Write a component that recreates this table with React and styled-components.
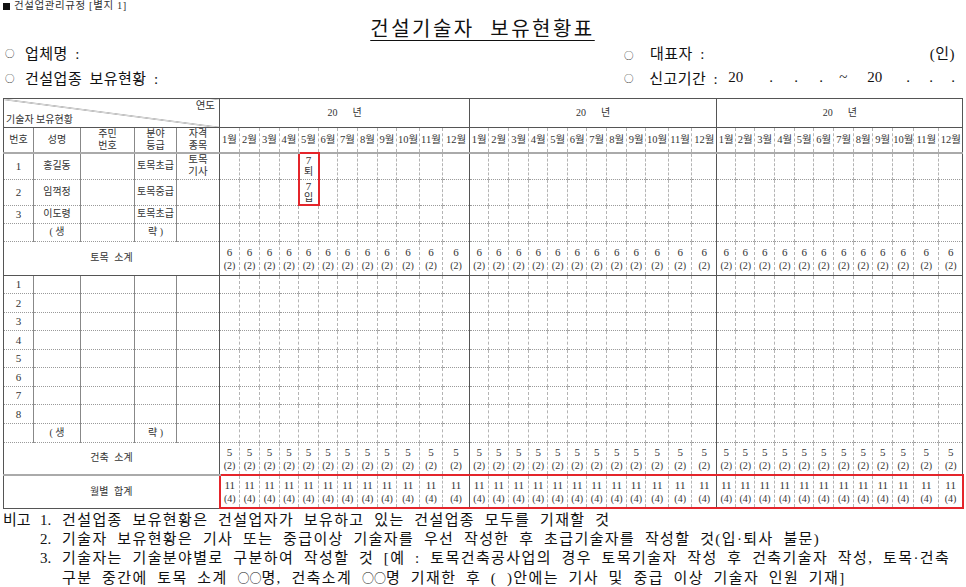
import React from 'react';
import styled, { createGlobalStyle } from 'styled-components';

const GlobalStyle = createGlobalStyle`
  html, body { margin: 0; padding: 0; background: #fff; }
  body {
    font-family: "Liberation Serif", "Noto Sans CJK KR", serif;
    color: #1a1a1a;
  }
`;

const Page = styled.div`
  width: 966px;
  height: 587px;
  overflow: hidden;
  padding-left: 3px;
  box-sizing: border-box;
`;

const TopNote = styled.div`
  height: 12px;
  display: flex;
  align-items: center;
  gap: 4px;
  font-size: 10.5px;
  letter-spacing: 0.6px;
  line-height: 12px;
  color: #333;
`;

const Square = styled.span`
  width: 7px;
  height: 7px;
  background: #111;
  display: inline-block;
`;

const Title = styled.h1`
  margin: 0;
  width: 959px;
  height: 22px;
  padding-top: 6px;
  text-align: center;
  font-size: 20px;
  font-weight: normal;
  line-height: 22px;
  color: #111;
`;

const TitleText = styled.span`
  text-decoration: underline;
  text-decoration-thickness: 1px;
  text-underline-offset: 4px;
  letter-spacing: 2.5px;
  word-spacing: 8px;
`;

const InfoRow = styled.div`
  display: grid;
  grid-template-columns: 619px 333px;
  height: 25px;
  align-items: center;
  font-size: 15px;
  color: #111;
  letter-spacing: 0.5px;
  word-spacing: 3px;
`;

const InfoItem = styled.div`
  display: flex;
  align-items: center;
  justify-content: ${p => (p.$spread ? 'space-between' : 'flex-start')};
  white-space: nowrap;
`;

const Bullet = styled.span`
  display: inline-block;
  width: ${p => p.$w || 22}px;
  padding-left: 2px;
  box-sizing: border-box;
  font-family: "Noto Sans CJK KR", sans-serif;
  font-size: 9.5px;
  letter-spacing: 0;
`;

const Circle = styled.span`
  font-family: "Noto Sans CJK KR", sans-serif;
  font-size: 12px;
  letter-spacing: 0;
`;

const DateRange = styled.div`
  display: grid;
  grid-template-columns: 41px 25px 25px 20px 28px 39px 23px 22px auto;
  margin-left: 10px;
  letter-spacing: 0;
`;

const Sheet = styled.table`
  width: 959px;
  table-layout: fixed;
  border-collapse: collapse;
  border: 1px solid #555;
  margin-top: 8px;
  font-size: 10px;
  color: #333;
`;

const Row = styled.tr`
  height: ${p => p.$h}px;
  & > td {
    ${p => p.$top === 'solid' && 'border-top: 1px solid #555;'}
    ${p => p.$top === 'thick' && 'border-top: 2px solid #aaa;'}
  }
`;

const RED = '2px solid #e4252b';

const Cell = styled.td`
  padding: 0;
  text-align: center;
  vertical-align: middle;
  line-height: 12px;
  white-space: nowrap;
  overflow: visible;
  border-top: 1px dotted #9a9a9a;
  border-left: ${p =>
    p.$left === 'block'
      ? '1px solid #555'
      : p.$left === 'solid'
      ? '1px solid #888'
      : p.$left === 'none'
      ? 'none'
      : '1px dashed #b4b4b4'};
  && {
    ${p => p.$red && p.$red.includes('t') && `border-top: ${RED};`}
    ${p => p.$red && p.$red.includes('b') && `border-bottom: ${RED};`}
    ${p => p.$red && p.$red.includes('l') && `border-left: ${RED};`}
    ${p => p.$red && p.$red.includes('r') && `border-right: ${RED};`}
  }
`;

const CornerCell = styled(Cell)`
  vertical-align: top;
  padding: 0 4px 0 2px;
  background: linear-gradient(
    to top right,
    transparent calc(50% - 0.7px),
    #777 50%,
    transparent calc(50% + 0.7px)
  );
`;

const CornerTop = styled.div`
  text-align: right;
  font-size: 10.5px;
  line-height: 14px;
`;

const CornerBottom = styled.div`
  text-align: left;
  font-size: 10px;
  line-height: 14px;
`;

const YearGap = styled.span`
  margin-left: 15px;
`;

const Line = styled.span`
  display: block;
  font-size: ${p => p.$size || 10}px;
  line-height: ${p => p.$lh || 12}px;
`;

const SubtotalLabel = styled(Cell)`
  word-spacing: 3px;
  font-size: 10px;
`;

const Notes = styled.div`
  margin-top: 2px;
  display: grid;
  grid-template-columns: 37px 22px 1fr;
  font-size: 15px;
  line-height: 19px;
  letter-spacing: 1.4px;
  word-spacing: 4.5px;
  color: #111;
  white-space: nowrap;
`;

const NoteCell = styled.div`
  letter-spacing: ${p => (p.$tight ? '0' : 'inherit')};
`;

const BLOCKS = [
  [20, 20, 20, 19, 20, 19, 20, 20, 19, 23, 23, 27],
  [19, 20, 20, 19, 20, 19, 20, 20, 19, 23, 23, 25],
  [19, 19, 20, 20, 19, 20, 20, 19, 20, 21, 25, 24],
];
const LEFT_COLS = [30, 47, 54, 42, 43];
const MONTHS = Array.from({ length: 12 }, (_, i) => i + 1);

const civilRows = [
  { no: '1', name: '홍길동', grade: '토목초급', qual: ['토목', '기사'], h: 26, mark: ['7', '퇴'], red: 'tlr' },
  { no: '2', name: '임꺽정', grade: '토목중급', h: 26, mark: ['7', '입'], red: 'blr' },
  { no: '3', name: '이도령', grade: '토목초급', h: 18 },
  { no: '', name: '( 생', grade: '략 )', h: 18 },
];

const archHeights = [18, 19, 18, 19, 18, 19, 18, 19];
const archRows = [
  ...archHeights.map((h, i) => ({ no: String(i + 1), name: '', grade: '', h })),
  { no: '', name: '( 생', grade: '략 )', h: 19 },
];

function monthCells(render) {
  const cells = [];
  BLOCKS.forEach((_, b) => {
    MONTHS.forEach((m, i) => {
      cells.push(render(b, i, m));
    });
  });
  return cells;
}

function PersonRow({ row, top }) {
  return (
    <Row $h={row.h} $top={top}>
      <Cell $left="none">
        <Line $size={11}>{row.no}</Line>
      </Cell>
      <Cell $left="solid">{row.name}</Cell>
      <Cell $left="solid"></Cell>
      <Cell $left="solid">{row.grade}</Cell>
      <Cell $left="solid">
        {row.qual && (
          <>
            <Line $size={10.5}>{row.qual[0]}</Line>
            <Line $size={10.5}>{row.qual[1]}</Line>
          </>
        )}
      </Cell>
      {monthCells((b, i) => {
        const isMark = b === 0 && i === 4 && row.mark;
        return (
          <Cell key={`${b}-${i}`} $left={i === 0 ? 'block' : undefined} $red={isMark ? row.red : undefined}>
            {isMark && (
              <>
                <Line $size={11}>{row.mark[0]}</Line>
                <Line $size={10}>{row.mark[1]}</Line>
              </>
            )}
          </Cell>
        );
      })}
    </Row>
  );
}

function TotalRow({ label, value, sub, h, top, red }) {
  return (
    <Row $h={h} $top={top}>
      <SubtotalLabel colSpan={5} $left="none">{label}</SubtotalLabel>
      {monthCells((b, i) => {
        let r;
        if (red) {
          r = 'tb';
          if (b === 0 && i === 0) r = 'tbl';
          if (b === 2 && i === 11) r = 'tbr';
        }
        return (
          <Cell key={`${b}-${i}`} $left={i === 0 ? 'block' : undefined} $red={r}>
            <Line $size={11} $lh={14}>{value}</Line>
            <Line $size={10} $lh={13}>{sub}</Line>
          </Cell>
        );
      })}
    </Row>
  );
}

export default function App() {
  return (
    <Page>
      <GlobalStyle />
      <TopNote>
        <Square />
        <span>건설업관리규정 [별지 1]</span>
      </TopNote>
      <Title>
        <TitleText>건설기술자 보유현황표</TitleText>
      </Title>
      <InfoRow>
        <InfoItem>
          <Bullet>○</Bullet>업체명 :
        </InfoItem>
        <InfoItem $spread>
          <span>
            <Bullet $w={28}>○</Bullet>대표자 :
          </span>
          <span>(인)</span>
        </InfoItem>
      </InfoRow>
      <InfoRow>
        <InfoItem>
          <Bullet>○</Bullet>건설업종 보유현황 :
        </InfoItem>
        <InfoItem>
          <Bullet $w={28}>○</Bullet>신고기간 :
          <DateRange>
            <span>20</span>
            <span>.</span>
            <span>.</span>
            <span>.</span>
            <span>~</span>
            <span>20</span>
            <span>.</span>
            <span>.</span>
            <span>.</span>
          </DateRange>
        </InfoItem>
      </InfoRow>

      <Sheet>
        <colgroup>
          {LEFT_COLS.map((w, i) => (
            <col key={`l${i}`} style={{ width: w }} />
          ))}
          {BLOCKS.map((blk, b) => blk.map((w, i) => <col key={`m${b}-${i}`} style={{ width: w }} />))}
        </colgroup>
        <tbody>
          <Row $h={29}>
            <CornerCell colSpan={5} $left="none">
              <CornerTop>연도</CornerTop>
              <CornerBottom>기술자 보유현황</CornerBottom>
            </CornerCell>
            {BLOCKS.map((_, b) => (
              <Cell key={b} colSpan={12} $left="block">
                20<YearGap>년</YearGap>
              </Cell>
            ))}
          </Row>
          <Row $h={24} $top="solid">
            <Cell $left="none">번호</Cell>
            <Cell $left="solid">성명</Cell>
            <Cell $left="solid">
              <Line>주민</Line>
              <Line>번호</Line>
            </Cell>
            <Cell $left="solid">
              <Line>분야</Line>
              <Line>등급</Line>
            </Cell>
            <Cell $left="solid">
              <Line>자격</Line>
              <Line>종목</Line>
            </Cell>
            {monthCells((b, i, m) => (
              <Cell key={`${b}-${i}`} $left={i === 0 ? 'block' : undefined}>
                <Line $size={10.5}>{m}월</Line>
              </Cell>
            ))}
          </Row>
          {civilRows.map((row, i) => (
            <PersonRow key={`c${i}`} row={row} top={i === 0 ? 'thick' : undefined} />
          ))}
          <TotalRow label="토목 소계" value="6" sub="(2)" h={34} />
          {archRows.map((row, i) => (
            <PersonRow key={`a${i}`} row={row} top={i === 0 ? 'solid' : undefined} />
          ))}
          <TotalRow label="건축 소계" value="5" sub="(2)" h={33} />
          <TotalRow label="월별 합계" value="11" sub="(4)" h={33} top="thick" red />
        </tbody>
      </Sheet>

      <Notes>
        <NoteCell $tight>비고</NoteCell>
        <NoteCell $tight>1.</NoteCell>
        <NoteCell>건설업종 보유현황은 건설업자가 보유하고 있는 건설업종 모두를 기재할 것</NoteCell>
        <NoteCell />
        <NoteCell $tight>2.</NoteCell>
        <NoteCell>기술자 보유현황은 기사 또는 중급이상 기술자를 우선 작성한 후 초급기술자를 작성할 것(입·퇴사 불문)</NoteCell>
        <NoteCell />
        <NoteCell $tight>3.</NoteCell>
        <NoteCell>
          기술자는 기술분야별로 구분하여 작성할 것 [예 : 토목건축공사업의 경우 토목기술자 작성 후 건축기술자 작성, 토목·건축
          <br />
          구분 중간에 토목 소계 <Circle>○○</Circle>명, 건축소계 <Circle>○○</Circle>명 기재한 후 ( )안에는 기사 및 중급 이상 기술자 인원 기재]
        </NoteCell>
      </Notes>
    </Page>
  );
}
